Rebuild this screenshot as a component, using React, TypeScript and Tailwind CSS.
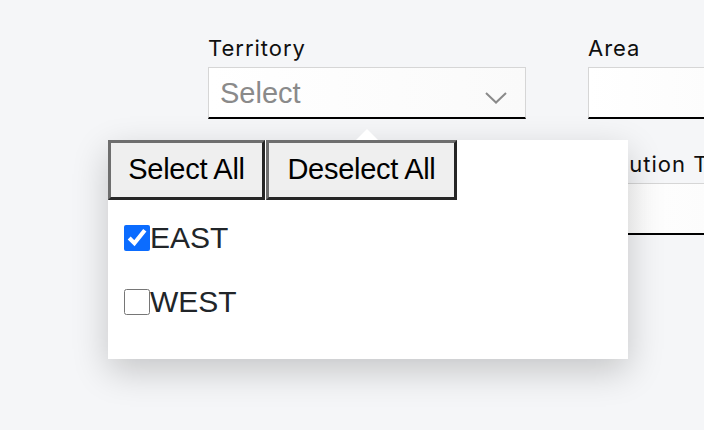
import { useState } from "react";

const LABEL_FONT = { fontFamily: "Inter, 'Liberation Sans', sans-serif" };
const BODY_FONT = { fontFamily: "'Liberation Sans', Arial, sans-serif" };

const OPTIONS = [
  { value: "EAST", checked: true },
  { value: "WEST", checked: false },
];

function Field({
  label,
  width,
  children,
}: {
  label: string;
  width: string;
  children?: React.ReactNode;
}) {
  return (
    <div className={`flex flex-col shrink-0 ${width}`}>
      <span
        className="text-[22px] font-normal leading-[28px] tracking-[0.045em] text-[#0f0f0f] whitespace-nowrap"
        style={LABEL_FONT}
      >
        {label}
      </span>
      <div className="mt-[5px] flex h-[52px] items-center justify-between border-[1.5px] border-b-2 border-[#d6d6d6] border-b-black bg-gradient-to-r from-white to-[#fafafa]">
        {children}
      </div>
    </div>
  );
}

export default function App() {
  const [items, setItems] = useState(OPTIONS);

  const toggle = (value: string) =>
    setItems((prev) =>
      prev.map((i) => (i.value === value ? { ...i, checked: !i.checked } : i))
    );

  return (
    <div className="relative h-[430px] w-full overflow-hidden bg-[#f5f6f8]" style={BODY_FONT}>
      <div className="flex flex-col pt-[34px]">
        {/* first row */}
        <div className="flex gap-[62px] pl-[208px]">
          <Field label="Territory" width="w-[318px]">
            <span className="pl-[11px] pt-[2px] text-[29px] text-[#8a8a8a]">Select</span>
            <svg width="22" height="12" viewBox="0 0 22 12" className="mr-[18px] mt-[10px]">
              <polyline
                points="1,1 11,10.5 21,1"
                fill="none"
                stroke="#8a8a8a"
                strokeWidth="2"
              />
            </svg>
          </Field>
          <Field label="Area" width="w-[200px]" />
        </div>

        {/* second row, mostly hidden behind the dropdown */}
        <div className="mt-[31px] flex pl-[555px]">
          <Field label="Distribution Type" width="w-[260px]" />
        </div>
      </div>

      {/* dropdown panel */}
      <div className="absolute left-[108px] top-[140px] flex h-[219px] w-[520px] flex-col bg-white shadow-[0_12px_34px_rgba(0,0,0,0.2)]">
        <div className="absolute -top-[11px] left-[248px] h-0 w-0 border-x-[11px] border-b-[11px] border-x-transparent border-b-white" />

        <div className="flex gap-[1px]">
          <button className="h-[60px] w-[157px] border-[3px] border-l-[#6e6e6e] border-t-[#6e6e6e] border-r-[#262626] border-b-[#262626] bg-[#efefef] text-[29px] tracking-[-0.01em] text-black">
            Select All
          </button>
          <button className="h-[60px] w-[191px] border-[3px] border-l-[#6e6e6e] border-t-[#6e6e6e] border-r-[#262626] border-b-[#262626] bg-[#efefef] text-[29px] tracking-[-0.01em] text-black">
            Deselect All
          </button>
        </div>

        <div className="mt-[6px] flex flex-col pl-[16px]">
          {items.map((item) => (
            <label key={item.value} className="flex h-[64px] items-center">
              <input
                type="checkbox"
                checked={item.checked}
                onChange={() => toggle(item.value)}
                className="m-0 h-[26px] w-[26px] accent-[#0b6cff]"
              />
              <span className="text-[30px] leading-none text-[#212529]">{item.value}</span>
            </label>
          ))}
        </div>
      </div>
    </div>
  );
}
